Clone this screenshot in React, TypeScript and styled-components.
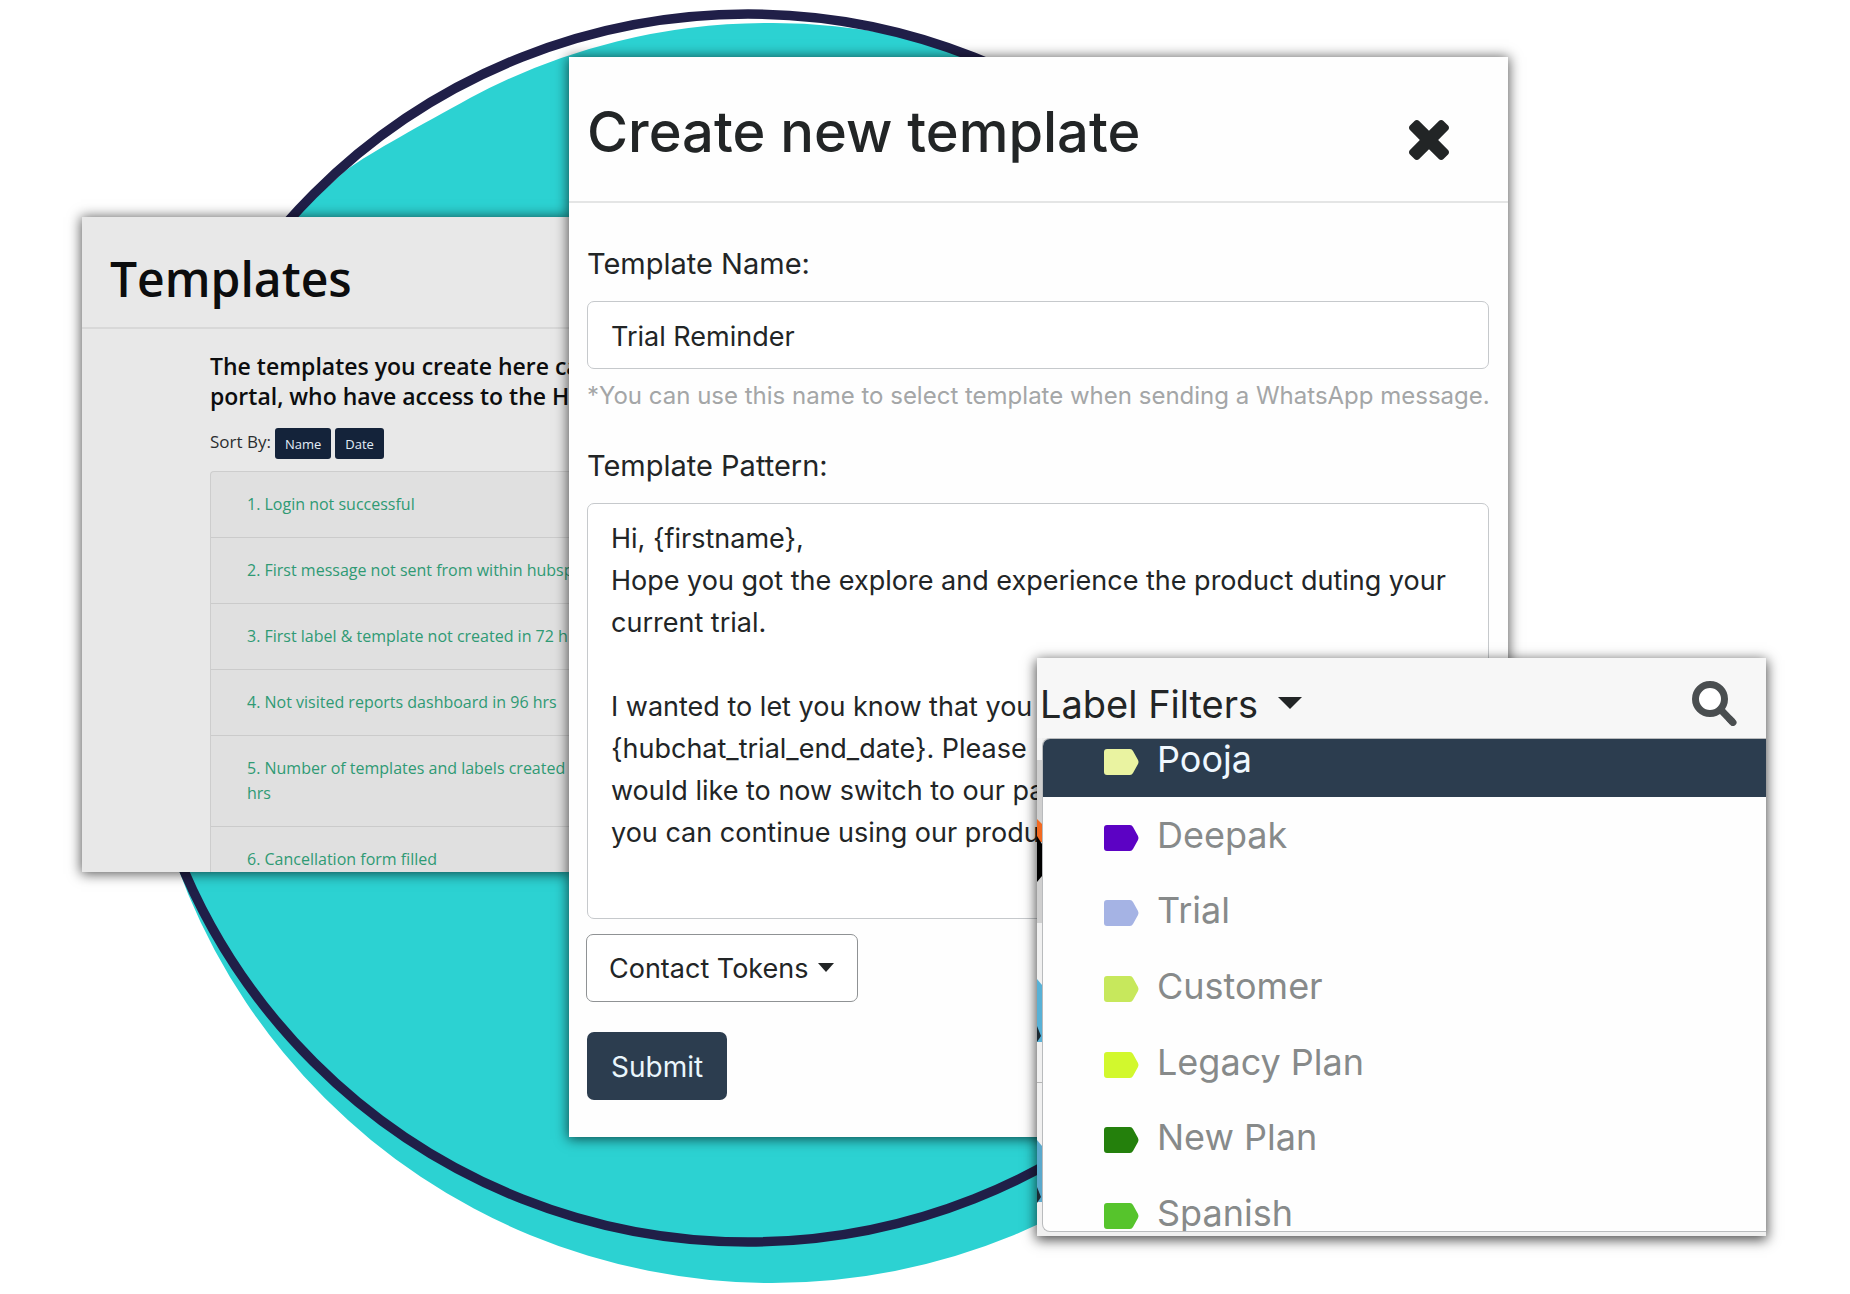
import React from "react";
import styled, { createGlobalStyle } from "styled-components";

const GlobalStyle = createGlobalStyle`
  *, *::before, *::after { box-sizing: border-box; }
  body { margin: 0; background: #fff; }
  h1, h2, p, ol, ul { margin: 0; padding: 0; }
  button, input, textarea, select { font: inherit; color: inherit; margin: 0; }
`;

const uiFont = `Inter, "Liberation Sans", sans-serif`;
const segoeFont = `"Open Sans", "Noto Sans", sans-serif`;
const navy = "#2c3d4f";

const Stage = styled.main`
  position: relative;
  display: grid;
  min-height: 100vh;
  overflow: hidden;
  grid-template-columns:
    minmax(0, 82fr) minmax(0, 487fr) minmax(0, 468fr)
    minmax(0, 471fr) minmax(0, 258fr) minmax(0, 84fr);
  grid-template-rows: 57px 160px 441px 214px 265px 99px auto;
`;

const Backdrop = styled.svg`
  position: absolute;
  inset: 0;
  width: 100%;
  height: 100%;
`;

const Panel = styled.section`
  position: relative;
  overflow: hidden;
`;

const TemplatesPanel = styled(Panel)`
  grid-column: 2 / 3;
  grid-row: 3 / 5;
  background: #e8e8e8;
  color: #0c0d0e;
  font-family: ${segoeFont};
  white-space: nowrap;
  box-shadow: 0 1px 12px 1px rgba(0, 0, 0, 0.65);
`;

const TemplatesHeader = styled.header`
  padding: 32px 28px 18px;
  border-bottom: 2px solid #d8d8d8;
`;

const TemplatesTitle = styled.h1`
  font-size: 48px;
  line-height: 60px;
  font-weight: 600;
`;

const TemplatesBody = styled.div`
  padding: 22px 0 0 128px;
`;

const Intro = styled.p`
  font-size: 23px;
  line-height: 30px;
  font-weight: 600;
`;

const SortBar = styled.div`
  display: flex;
  align-items: center;
  gap: 4px;
  margin: 17px 0 12px;
  font-size: 17px;
  line-height: 24px;
  color: #2b2d2f;
`;

const SortLabel = styled.span`
  padding-bottom: 4px;
`;

const SortButton = styled.button`
  height: 31px;
  padding: 0 10px;
  border: 0;
  border-radius: 3px;
  background: #14233a;
  color: #e3edf7;
  font-size: 13px;
`;

const TemplateList = styled.ol`
  list-style: none;
  border: 1px solid #cdcdcd;
  border-right: 0;
  border-radius: 4px 0 0 0;
  background: #e0e0e0;
`;

const TemplateItem = styled.li`
  padding: 20px 36px;
  border-bottom: 1px solid #cbcbcb;
  font-size: 16px;
  line-height: 25px;
`;

const TemplateLink = styled.a`
  color: #2f9a74;
  text-decoration: none;
`;

const Modal = styled(Panel)`
  grid-column: 3 / 5;
  grid-row: 2 / 6;
  background: #fefefe;
  color: #222526;
  font-family: ${uiFont};
  font-size: 27px;
  line-height: 42px;
  box-shadow: 0 1px 12px 1px rgba(0, 0, 0, 0.65);
`;

const ModalHeader = styled.header`
  display: flex;
  align-items: center;
  justify-content: space-between;
  height: 146px;
  padding: 22px 59px 0 18px;
  border-bottom: 2px solid #e4e5e5;
`;

const ModalTitle = styled.h2`
  padding-bottom: 16px;
  font-size: 56px;
  line-height: 68px;
  font-weight: 500;
`;

const IconButton = styled.button`
  display: flex;
  padding: 0;
  border: 0;
  background: none;
`;

const Form = styled.form`
  display: flex;
  flex-direction: column;
  align-items: flex-start;
  padding: 40px 19px 37px 18px;
`;

const FieldLabel = styled.label`
  margin-bottom: 16px;
  font-size: 29px;
`;

const TextInput = styled.input`
  width: 100%;
  height: 68px;
  padding: 2px 23px 0;
  border: 1px solid #c6c9cc;
  border-radius: 7px;
  background: #fff;
  outline: 0;
`;

const Hint = styled.small`
  margin: 11px 0 33px;
  color: #a4a6a7;
  font-size: 24px;
  line-height: 32px;
  white-space: nowrap;
`;

const PatternInput = styled.textarea`
  display: block;
  width: 100%;
  height: 416px;
  padding: 14px 23px;
  border: 1px solid #c6c9cc;
  border-radius: 7px;
  background: #fff;
  outline: 0;
  resize: none;
  overflow: hidden;
`;

const TokenPicker = styled.div`
  display: grid;
  align-items: center;
  width: 272px;
  margin: 15px 0 30px -1px;
`;

const TokenSelect = styled.select`
  grid-area: 1 / 1;
  appearance: none;
  height: 68px;
  padding: 2px 22px 0;
  border: 1px solid #8f9294;
  border-radius: 7px;
  background: #fff;
  outline: 0;
`;

const TokenCaret = styled.svg`
  grid-area: 1 / 1;
  justify-self: end;
  margin: 0 24px 2px 0;
  pointer-events: none;
`;

const SubmitButton = styled.button`
  height: 68px;
  padding: 2px 24px 0;
  border: 0;
  border-radius: 7px;
  background: ${navy};
  color: #eaf6fc;
  font-size: 28px;
`;

const FilterPanel = styled(Panel)`
  grid-column: 4 / 6;
  grid-row: 4 / 7;
  display: flex;
  flex-direction: column;
  background: #f0f0f0;
  font-family: ${uiFont};
  font-size: 36px;
  line-height: 48px;
  box-shadow: 0 3px 12px 1px rgba(0, 0, 0, 0.7);
`;

const FilterHeader = styled.header`
  display: flex;
  align-items: center;
  justify-content: space-between;
  height: 80px;
  padding: 10px 29px 0 3px;
  background: #f7f7f7;
  color: #222526;
`;

const FilterToggle = styled.button`
  display: flex;
  align-items: center;
  gap: 20px;
  padding: 2px 0 0;
  border: 0;
  background: none;
  font-size: 38px;
`;

const FilterCaret = styled.svg`
  margin-bottom: 3px;
`;

const FilterBody = styled.div`
  display: grid;
  grid-template-columns: 5px minmax(0, 1fr);
  flex: 1;
  min-height: 0;
  padding-bottom: 4px;
`;

const EdgeArt = styled.svg`
  width: 5px;
  height: 100%;
`;

const FilterMenu = styled.div`
  overflow: hidden;
  border: 1px solid #b9bbbd;
  border-right: 0;
  border-radius: 8px 0 0 8px;
  background: #fefefe;
`;

const FilterList = styled.ul`
  display: grid;
  grid-auto-rows: 1fr;
  height: 529px;
  margin-top: -18px;
  list-style: none;
`;

const FilterOption = styled.button<{ $selected: boolean }>`
  display: flex;
  align-items: center;
  gap: 18px;
  width: 100%;
  height: 100%;
  padding: 1px 61px 0;
  border: 0;
  background: ${(p) => (p.$selected ? navy : "transparent")};
  color: ${(p) => (p.$selected ? "#f0f8ff" : "#878a8a")};
  text-align: left;
`;

const Tag = styled.svg`
  flex: none;
  margin-top: 6px;
`;

const templates = [
  "1. Login not successful",
  "2. First message not sent from within hubspot",
  "3. First label & template not created in 72 hrs",
  "4. Not visited reports dashboard in 96 hrs",
  "5. Number of templates and labels created af\nhrs",
  "6. Cancellation form filled",
];

const labels = [
  { name: "Pooja", color: "#eaf3a1" },
  { name: "Deepak", color: "#5c02c4" },
  { name: "Trial", color: "#a5b3e4" },
  { name: "Customer", color: "#c7e85c" },
  { name: "Legacy Plan", color: "#d2f82d" },
  { name: "New Plan", color: "#24800c" },
  { name: "Spanish", color: "#56c42c" },
];

const pattern = `Hi, {firstname},
Hope you got the explore and experience the product duting your
current trial.

I wanted to let you know that you
{hubchat_trial_end_date}. Please
would like to now switch to our pai
you can continue using our product`;

export default function App() {
  return (
    <>
      <GlobalStyle />
      <Stage>
        <Backdrop viewBox="0 0 1850 1294" aria-hidden="true">
          <path
            d="M773 23A630 630 0 0 0 470 98C420 126 374 150 345 171L245 262C170 370 140 520 140 653A632 630 0 1 0 773 23Z"
            fill="#2cd2d2"
          />
          <circle cx="748" cy="628" r="614" fill="none" stroke="#201f48" strokeWidth="9.5" />
        </Backdrop>

        <TemplatesPanel>
          <TemplatesHeader>
            <TemplatesTitle>Templates</TemplatesTitle>
          </TemplatesHeader>
          <TemplatesBody>
            <Intro>
              The templates you create here can
              <br />
              portal, who have access to the Hu
            </Intro>
            <SortBar>
              <SortLabel>Sort By:</SortLabel>
              <SortButton type="button">Name</SortButton>
              <SortButton type="button">Date</SortButton>
            </SortBar>
            <TemplateList>
              {templates.map((t) => (
                <TemplateItem key={t}>
                  <TemplateLink href="#">
                    {t.split("\n").map((line, i) => (
                      <React.Fragment key={line}>
                        {i > 0 && <br />}
                        {line}
                      </React.Fragment>
                    ))}
                  </TemplateLink>
                </TemplateItem>
              ))}
            </TemplateList>
          </TemplatesBody>
        </TemplatesPanel>

        <Modal role="dialog" aria-labelledby="modal-title">
          <ModalHeader>
            <ModalTitle id="modal-title">Create new template</ModalTitle>
            <IconButton type="button" aria-label="Close">
              <svg width="40" height="40" viewBox="302 366 1188 1188">
                <path
                  fill="#222526"
                  d="M1490 1322q0 40-28 68l-136 136q-28 28-68 28t-68-28l-294-294-294 294q-28 28-68 28t-68-28l-136-136q-28-28-28-68t28-68l294-294-294-294q-28-28-28-68t28-68l136-136q28-28 68-28t68 28l294 294 294-294q28-28 68-28t68 28l136 136q28 28 28 68t-28 68l-294 294 294 294q28 28 28 68z"
                />
              </svg>
            </IconButton>
          </ModalHeader>
          <Form onSubmit={(e) => e.preventDefault()}>
            <FieldLabel htmlFor="template-name">Template Name:</FieldLabel>
            <TextInput id="template-name" type="text" defaultValue="Trial Reminder" />
            <Hint>*You can use this name to select template when sending a WhatsApp message.</Hint>
            <FieldLabel htmlFor="template-pattern">Template Pattern:</FieldLabel>
            <PatternInput id="template-pattern" defaultValue={pattern} spellCheck={false} />
            <TokenPicker>
              <TokenSelect aria-label="Contact Tokens">
                <option>Contact Tokens</option>
              </TokenSelect>
              <TokenCaret width="16" height="9" viewBox="0 0 16 9" aria-hidden="true">
                <path d="M0 0h16L8 9z" fill="#222526" />
              </TokenCaret>
            </TokenPicker>
            <SubmitButton type="submit">Submit</SubmitButton>
          </Form>
        </Modal>

        <FilterPanel>
          <FilterHeader>
            <FilterToggle type="button" aria-expanded="true">
              Label Filters
              <FilterCaret width="24" height="12" viewBox="0 0 24 12" aria-hidden="true">
                <path d="M0 0h24L12 12z" fill="#222526" />
              </FilterCaret>
            </FilterToggle>
            <IconButton type="button" aria-label="Search">
              <svg width="45" height="45" viewBox="0 0 45 45" fill="none" stroke="#4a4e50">
                <circle cx="18" cy="18" r="14.5" strokeWidth="7" fill="#fff" />
                <path d="M29 29L40.5 41" strokeWidth="7" />
                <path d="M38 38.400L41 41.500" strokeWidth="7" strokeLinecap="round" />
              </svg>
            </IconButton>
          </FilterHeader>
          <FilterBody>
            <EdgeArt viewBox="0 0 5 494" preserveAspectRatio="none" aria-hidden="true">
              <path d="M0 0h5v22H0z" fill="#f4f4f4" />
              <path d="M0 22h5v163H0z" fill="#cfcfcf" />
              <path d="M0 81l5 5v18H0z" fill="#f26a21" />
              <path d="M0 98l5 8v32l-5 6z" fill="#000" />
              <path d="M0 241l5 6v57H0z" fill="#58b1d6" />
              <path d="M0 288l4 10-4 6z" fill="#1c2a33" />
              <path d="M0 344h5v1H0z" fill="#b5b5b5" />
              <path d="M0 402l5 6v56H0z" fill="#5aa9cc" />
              <path d="M0 449l4 10-4 6z" fill="#1c2a33" />
            </EdgeArt>
            <FilterMenu>
              <FilterList>
                {labels.map((l, i) => (
                  <li key={l.name}>
                    <FilterOption type="button" $selected={i === 0}>
                      <Tag width="35" height="26" viewBox="0 0 35 26" aria-hidden="true">
                        <path
                          d="M3 0h23q2 0 3 2l5 9q1 2 0 4l-5 9q-1 2-3 2H3q-3 0-3-3V3q0-3 3-3z"
                          fill={l.color}
                        />
                      </Tag>
                      {l.name}
                    </FilterOption>
                  </li>
                ))}
              </FilterList>
            </FilterMenu>
          </FilterBody>
        </FilterPanel>
      </Stage>
    </>
  );
}
